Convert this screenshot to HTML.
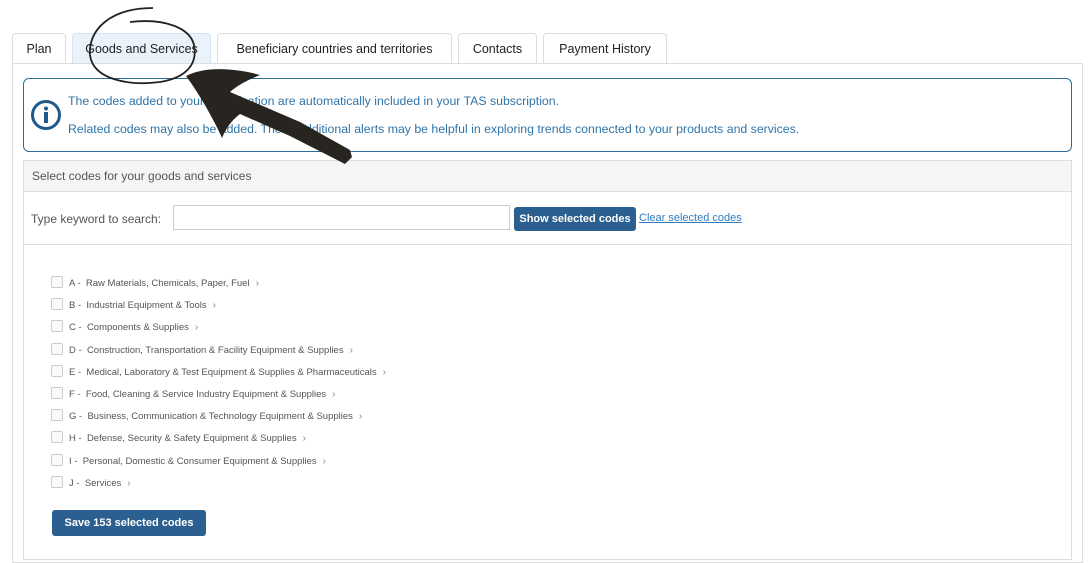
<!DOCTYPE html>
<html><head><meta charset="utf-8"><style>
body{margin:0;width:1092px;height:552px;background:#fff;font-family:"Liberation Sans",sans-serif;position:relative;overflow:hidden}
.tab{position:absolute;top:33px;height:30px;border:1px solid #ddd;border-bottom:none;border-radius:4px 4px 0 0;background:#fff;font-size:12.5px;color:#222;line-height:30px;text-align:center;box-sizing:border-box}
.outer{position:absolute;left:12px;top:63px;width:1071px;height:500px;border:1px solid #ddd;box-sizing:border-box}
.info{position:absolute;left:23px;top:78px;width:1049px;height:74px;border:1px solid #2d6d9b;border-radius:6px;box-sizing:border-box;color:#2f74a8;font-size:12.3px}
.panel{position:absolute;left:23px;top:160px;width:1049px;height:400px;border:1px solid #ddd;box-sizing:border-box}
.ph{height:30px;background:#f5f5f5;border-bottom:1px solid #ddd;font-size:12px;color:#555;line-height:30px;padding-left:8px}
.row{position:absolute;left:27px;font-size:9.5px;color:#555;height:14px;line-height:14px}
.row i{display:inline-block;width:10px;height:10px;border:1px solid #ccc;border-radius:2px;vertical-align:-2px;margin-right:6px;background:#fafafa}
.row b{font-weight:normal;color:#888;margin-left:6px;font-size:10px}
.btn{position:absolute;background:#2b5f8f;color:#fff;font-weight:bold;font-size:11px;border-radius:3px;text-align:center}
</style></head><body>
<div class="outer"></div>
<div class="tab" style="left:12px;width:54px">Plan</div>
<div class="tab" style="left:72px;width:139px;background:#eaf3fc;border-color:#d6e4f0">Goods and Services</div>
<div class="tab" style="left:217px;width:235px">Beneficiary countries and territories</div>
<div class="tab" style="left:458px;width:79px">Contacts</div>
<div class="tab" style="left:543px;width:124px">Payment History</div>
<div class="info">
<svg style="position:absolute;left:6px;top:20px" width="32" height="32" viewBox="0 0 32 32"><circle cx="16" cy="16" r="13.5" fill="none" stroke="#1f5a8a" stroke-width="3"/><circle cx="16" cy="9.5" r="2" fill="#1f5a8a"/><rect x="14" y="13" width="4" height="11" fill="#1f5a8a"/></svg>
<div style="position:absolute;left:44px;top:15px">The codes added to your organisation are automatically included in your TAS subscription.</div>
<div style="position:absolute;left:44px;top:43px">Related codes may also be added. These additional alerts may be helpful in exploring trends connected to your products and services.</div>
</div>
<div class="panel">
<div class="ph">Select codes for your goods and services</div>
<div style="position:absolute;left:7px;top:51px;font-size:12px;color:#555">Type keyword to search:</div>
<div style="position:absolute;left:149px;top:44px;width:337px;height:25px;border:1px solid #ccc;box-sizing:border-box"></div>
<div class="btn" style="left:490px;top:46px;width:122px;height:24px;line-height:24px">Show selected codes</div>
<div style="position:absolute;left:615px;top:51px;font-size:11px;color:#2f7dc0;text-decoration:underline">Clear selected codes</div>
<div style="position:absolute;left:0;right:0;top:83px;border-top:1px solid #ddd"></div>
<div class="row" style="top:115px"><i></i>A - &nbsp;Raw Materials, Chemicals, Paper, Fuel<b>›</b></div>
<div class="row" style="top:137px"><i></i>B - &nbsp;Industrial Equipment &amp; Tools<b>›</b></div>
<div class="row" style="top:159px"><i></i>C - &nbsp;Components &amp; Supplies<b>›</b></div>
<div class="row" style="top:182px"><i></i>D - &nbsp;Construction, Transportation &amp; Facility Equipment &amp; Supplies<b>›</b></div>
<div class="row" style="top:204px"><i></i>E - &nbsp;Medical, Laboratory &amp; Test Equipment &amp; Supplies &amp; Pharmaceuticals<b>›</b></div>
<div class="row" style="top:226px"><i></i>F - &nbsp;Food, Cleaning &amp; Service Industry Equipment &amp; Supplies<b>›</b></div>
<div class="row" style="top:248px"><i></i>G - &nbsp;Business, Communication &amp; Technology Equipment &amp; Supplies<b>›</b></div>
<div class="row" style="top:270px"><i></i>H - &nbsp;Defense, Security &amp; Safety Equipment &amp; Supplies<b>›</b></div>
<div class="row" style="top:293px"><i></i>I - &nbsp;Personal, Domestic &amp; Consumer Equipment &amp; Supplies<b>›</b></div>
<div class="row" style="top:315px"><i></i>J - &nbsp;Services<b>›</b></div>
<div class="btn" style="left:28px;top:349px;width:154px;height:26px;line-height:26px">Save 153 selected codes</div>
</div>
<svg style="position:absolute;left:0;top:0" width="1092" height="552">
<path d="M153 8 C110 8 88 30 90 55 C93 80 130 86 160 82 C185 78 198 65 194 45 C190 28 165 18 130 22" fill="none" stroke="#222" stroke-width="1.8"/>
<path d="M186 76 C205 66 235 68 260 75 C248 80 238 85 230 92 L300 122 L350 150 L352 157 L345 164 L290 136 L240 114 C232 120 226 128 222 138 C214 120 200 95 186 76 Z" fill="#28241f"/>
</svg>
</body></html>
